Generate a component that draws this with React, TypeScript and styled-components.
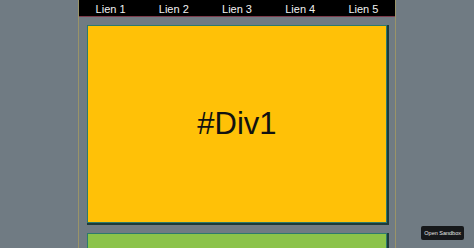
import styled, { createGlobalStyle } from "styled-components";

const LINKS = ["Lien 1", "Lien 2", "Lien 3", "Lien 4", "Lien 5"];

const GlobalStyle = createGlobalStyle`
  html, body {
    margin: 0;
    padding: 0;
    height: 100%;
    overflow: hidden;
    background: #707b83;
    font-family: "Liberation Sans", Arial, sans-serif;
  }
`;

const Page = styled.div`
  width: 316px;
  margin: 0 auto;
  min-height: 100vh;
  border-left: 1px solid #9a9468;
  border-right: 1px solid #9a9468;
`;

const Nav = styled.nav`
  display: flex;
  height: 16px;
  background: #000;
  border-bottom: 1px solid #7c3b4c;
`;

const NavLink = styled.a`
  flex: 1;
  display: flex;
  align-items: center;
  justify-content: center;
  padding-top: 1px;
  color: #f2f2f2;
  font-size: 11px;
  text-decoration: none;
`;

const Block = styled.section<{ $bg: string }>`
  display: flex;
  align-items: center;
  justify-content: center;
  height: 196px;
  margin: 8px 8px 10px;
  background: ${(p) => p.$bg};
  border: 1px solid #2d7a6c;
  box-shadow: 1px 1px 0 1px #1d3a3a;
  color: #111;
  font-size: 31px;
`;

const SandboxButton = styled.button`
  position: fixed;
  right: 10px;
  bottom: 8px;
  height: 14px;
  padding: 0 3px;
  border: none;
  border-radius: 2px;
  background: #16181a;
  color: #e8e8e8;
  font-family: "Liberation Sans", Arial, sans-serif;
  font-size: 5.5px;
`;

export default function App() {
  return (
    <>
      <GlobalStyle />
      <Page>
        <Nav>
          {LINKS.map((l) => (
            <NavLink key={l} href="#">
              {l}
            </NavLink>
          ))}
        </Nav>
        <Block $bg="#ffc107">#Div1</Block>
        <Block $bg="#8bc34a" />
      </Page>
      <SandboxButton>Open Sandbox</SandboxButton>
    </>
  );
}
